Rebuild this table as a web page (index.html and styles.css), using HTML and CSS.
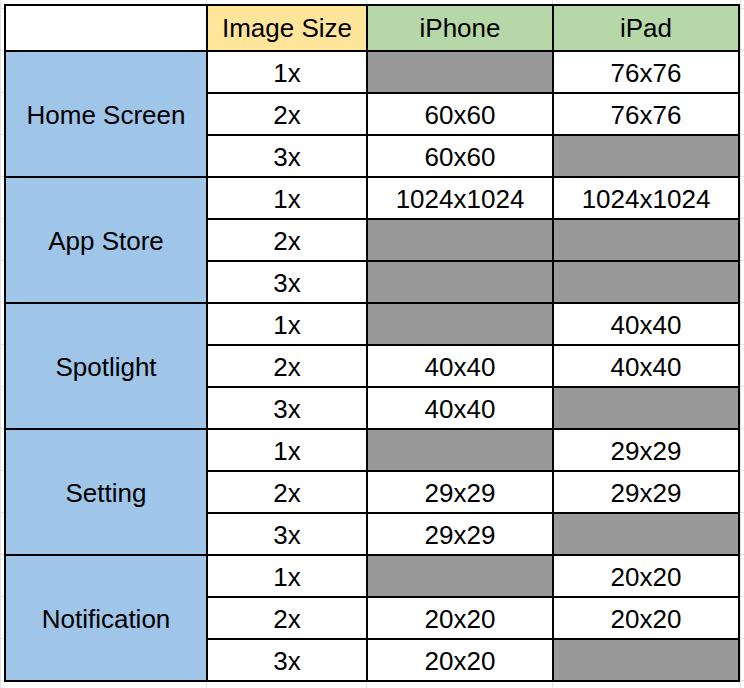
FILE: index.html
```html
<!DOCTYPE html>
<html lang="en">
<head>
<meta charset="utf-8">
<title>App Icon Sizes</title>
<link rel="stylesheet" href="styles.css">
</head>
<body>
<table class="sizes">
  <colgroup>
    <col class="c-type"><col class="c-scale"><col class="c-dev"><col class="c-dev">
  </colgroup>
  <thead>
    <tr>
      <th class="blank"></th>
      <th class="h-scale">Image Size</th>
      <th class="h-dev">iPhone</th>
      <th class="h-dev">iPad</th>
    </tr>
  </thead>
  <tbody>
    <tr><td class="type" rowspan="3">Home Screen</td><td>1x</td><td class="na"></td><td>76x76</td></tr>
    <tr><td>2x</td><td>60x60</td><td>76x76</td></tr>
    <tr><td>3x</td><td>60x60</td><td class="na"></td></tr>

    <tr><td class="type" rowspan="3">App Store</td><td>1x</td><td>1024x1024</td><td>1024x1024</td></tr>
    <tr><td>2x</td><td class="na"></td><td class="na"></td></tr>
    <tr><td>3x</td><td class="na"></td><td class="na"></td></tr>

    <tr><td class="type" rowspan="3">Spotlight</td><td>1x</td><td class="na"></td><td>40x40</td></tr>
    <tr><td>2x</td><td>40x40</td><td>40x40</td></tr>
    <tr><td>3x</td><td>40x40</td><td class="na"></td></tr>

    <tr><td class="type" rowspan="3">Setting</td><td>1x</td><td class="na"></td><td>29x29</td></tr>
    <tr><td>2x</td><td>29x29</td><td>29x29</td></tr>
    <tr><td>3x</td><td>29x29</td><td class="na"></td></tr>

    <tr><td class="type" rowspan="3">Notification</td><td>1x</td><td class="na"></td><td>20x20</td></tr>
    <tr><td>2x</td><td>20x20</td><td>20x20</td></tr>
    <tr><td>3x</td><td>20x20</td><td class="na"></td></tr>
  </tbody>
</table>
</body>
</html>
```
FILE: styles.css
```css
html, body {
  margin: 0;
  padding: 0;
}

body {
  width: 744px;
  height: 688px;
  overflow: hidden;
  background-color: #ffffff;
  background-image:
    linear-gradient(to right, transparent 206px, #e2e2e2 206px, #e2e2e2 207px, transparent 207px),
    linear-gradient(to right, transparent 366px, #e2e2e2 366px, #e2e2e2 367px, transparent 367px),
    linear-gradient(to right, transparent 552px, #e2e2e2 552px, #e2e2e2 553px, transparent 553px),
    linear-gradient(to right, transparent 740px, #e2e2e2 740px, #e2e2e2 741px, transparent 741px),
    linear-gradient(to right, #e2e2e2 0, #e2e2e2 1px, transparent 1px),
    linear-gradient(to bottom, transparent 0, transparent 8px, #e2e2e2 8px, #e2e2e2 9px, transparent 9px);
  background-size: 100% 100%, 100% 100%, 100% 100%, 100% 100%, 100% 100%, 100% 42px;
  background-repeat: no-repeat, no-repeat, no-repeat, no-repeat, no-repeat, repeat-y;
  font-family: "Liberation Sans", Arial, sans-serif;
  color: #000000;
}

.sizes {
  margin: 4px 0 0 4px;
  border-collapse: separate;
  border-spacing: 0;
  table-layout: fixed;
  width: 736px;
  border-top: 2px solid #000;
  border-left: 2px solid #000;
}

.c-type { width: 202px; }
.c-scale { width: 160px; }
.c-dev { width: 186px; }

.sizes th,
.sizes td {
  box-sizing: border-box;
  padding: 1px 0 0;
  border-right: 2px solid #000;
  border-bottom: 2px solid #000;
  background: #ffffff;
  text-align: center;
  vertical-align: middle;
  font-size: 26px;
  font-weight: normal;
  line-height: 1;
  white-space: nowrap;
}

.sizes thead th {
  height: 46px;
  padding-top: 0;
}

.sizes tbody td {
  height: 42px;
}

.sizes .h-scale { background: #ffe599; }
.sizes .h-dev { background: #b6d7a8; }
.sizes .type { background: #9fc5e8; }
.sizes .na { background: #999999; }
```
